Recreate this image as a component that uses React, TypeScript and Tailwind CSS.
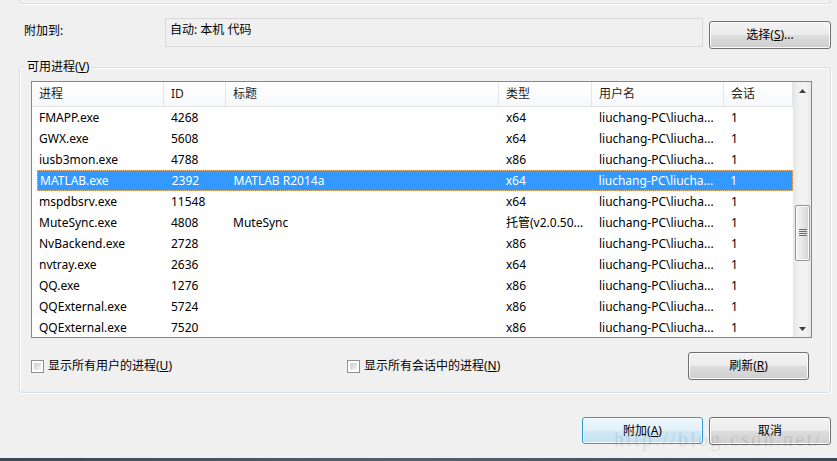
import React from "react";

const rows = [
  ["FMAPP.exe", "4268", "", "x64"],
  ["GWX.exe", "5608", "", "x64"],
  ["iusb3mon.exe", "4788", "", "x86"],
  ["MATLAB.exe", "2392", "MATLAB R2014a", "x64"],
  ["mspdbsrv.exe", "11548", "", "x64"],
  ["MuteSync.exe", "4808", "MuteSync", "托管(v2.0.50..."],
  ["NvBackend.exe", "2728", "", "x86"],
  ["nvtray.exe", "2636", "", "x64"],
  ["QQ.exe", "1276", "", "x86"],
  ["QQExternal.exe", "5724", "", "x86"],
  ["QQExternal.exe", "7520", "", "x86"],
];

function WinButton({ children, primary = false, className = "" }: { children: React.ReactNode; primary?: boolean; className?: string }) {
  return (
    <button
      className={
        primary
          ? `h-[27px] rounded-[3px] border border-[#3399dd] bg-[linear-gradient(#eef7fd_0%,#e1f0fa_50%,#d2e9f6_50%,#c4e0f2_100%)] shadow-[inset_0_0_0_1px_#f4fafe] text-[12px] text-black ${className}`
          : `h-[28px] rounded-[3px] border border-[#707070] bg-[linear-gradient(#f3f3f3_0%,#ebebeb_50%,#dddddd_50%,#cfcfcf_100%)] shadow-[inset_0_0_0_1px_#fbfbfb] text-[12px] text-black ${className}`
      }
    >
      {children}
    </button>
  );
}

function CheckBox({ label }: { label: React.ReactNode }) {
  return (
    <div className="flex items-center gap-[4px]">
      <div className="h-[13px] w-[13px] border border-[#8e8f8f] bg-white p-[2px]">
        <div className="h-full w-full bg-[linear-gradient(135deg,#cdcdcd,#f5f5f5)]" />
      </div>
      <span>{label}</span>
    </div>
  );
}

const colW = ["w-[127px] pl-[2px]", "w-[62px] pl-[7px]", "w-[273px] pl-[7px]", "w-[93px] pl-[7px]", "w-[132px] pl-[7px]", "w-[69px] pl-[7px]"];
const headW = ["w-[132px] pl-[7px]", "w-[62px] pl-[7px]", "w-[273px] pl-[7px]", "w-[93px] pl-[7px]", "w-[132px] pl-[7px]", "w-[69px] pl-[7px]"];

export default function App() {
  return (
    <div className="relative flex h-[461px] w-[837px] flex-col overflow-hidden bg-[#f0f0f0] font-['Noto_Sans','Noto_Sans_CJK_SC',sans-serif] text-[12px] text-black">
      {/* bottom edge of the group box above */}
      <div className="ml-[19px] h-[4px] w-[812px] rounded-b-[3px] border-x border-b border-[#d5dfe5] shadow-[0_1px_0_#ffffff]" />

      <div className="mt-[14px] flex items-start">
        <div className="w-[165px] pl-[24px] pt-[5px] leading-[16px]">附加到:</div>
        <div className="h-[29px] w-[538px] border border-[#d9d9d9] bg-[#f0f0f0] pl-[4px] pt-[3px] leading-[16px]">
          自动: 本机 代码
        </div>
        <WinButton className="ml-[6px] mt-[3px] w-[122px]">
          选择(<u>S</u>)...
        </WinButton>
      </div>

      <div className="relative ml-[19px] mt-[18px] flex h-[326px] w-[812px] flex-col rounded-[3px] border border-[#d5dfe5] shadow-[inset_1px_1px_0_#ffffff,1px_1px_0_#ffffff]">
        <span className="absolute left-[5px] top-[-9px] bg-[#f0f0f0] px-[2px] leading-[16px]">
          可用进程(<u>V</u>)
        </span>

        <div className="ml-[11px] mt-[13px] flex h-[257px] w-[781px] border border-[#828790] bg-white">
          <div className="flex w-[761px] flex-col overflow-hidden">
            <div className="flex h-[25px] shrink-0 border-b border-[#e2e4e8] bg-[linear-gradient(#ffffff,#f7f8fa)]">
              {["进程", "ID", "标题", "类型", "用户名", "会话"].map((h, i) => (
                <div key={h} className={`${headW[i]} flex items-center border-r border-[#e3e5e8] text-[#1e1e1e]`}>
                  {h}
                </div>
              ))}
            </div>
            {rows.map((r, idx) => {
              const sel = idx === 3;
              return (
                <div key={idx} className="h-[21px] shrink-0 pl-[5px]">
                  <div
                    className={
                      sel
                        ? "flex h-[21px] border border-dotted border-[#f2b878] bg-[#3399ff] leading-[19px] text-white"
                        : "flex h-[21px] leading-[21px]"
                    }
                  >
                    {[r[0], r[1], r[2], r[3], "liuchang-PC\\liucha...", "1"].map((c, i) => (
                      <div key={i} className={`${colW[i]} overflow-hidden whitespace-nowrap`}>
                        {c}
                      </div>
                    ))}
                  </div>
                </div>
              );
            })}
          </div>

          {/* vertical scrollbar */}
          <div className="flex w-[18px] flex-col items-center border-l border-[#e6e6e6] bg-[linear-gradient(90deg,#e8e8e8,#f2f2f2_30%,#f2f2f2_70%,#e8e8e8)]">
            <div className="flex h-[17px] items-center justify-center">
              <svg width="7" height="4" viewBox="0 0 7 4">
                <path d="M3.5 0 L7 4 L0 4 Z" fill="#3f3f3f" />
              </svg>
            </div>
            <div className="h-[106px]" />
            <div className="flex h-[56px] w-[15px] items-center justify-center rounded-[2px] border border-[#979797] bg-[linear-gradient(90deg,#f5f5f5,#e6e6e6_50%,#d2d2d2)] shadow-[inset_0_0_0_1px_#fafafa]">
              <svg width="8" height="8" viewBox="0 0 8 8">
                <path d="M0 0.5 H8 M0 2.5 H8 M0 4.5 H8 M0 6.5 H8" stroke="#6d6d6d" strokeWidth="1" />
              </svg>
            </div>
            <div className="flex-1" />
            <div className="flex h-[17px] items-center justify-center">
              <svg width="7" height="4" viewBox="0 0 7 4">
                <path d="M0 0 L7 0 L3.5 4 Z" fill="#3f3f3f" />
              </svg>
            </div>
          </div>
        </div>

        <div className="ml-[11px] mt-[14px] flex h-[28px] items-center">
          <div className="w-[316px]">
            <CheckBox label={<>显示所有用户的进程(<u>U</u>)</>} />
          </div>
          <div className="w-[341px]">
            <CheckBox label={<>显示所有会话中的进程(<u>N</u>)</>} />
          </div>
          <WinButton className="w-[121px]">
            刷新(<u>R</u>)
          </WinButton>
        </div>
      </div>

      <div className="mt-[24px] flex justify-end gap-[6px] pr-[6px]">
        <WinButton primary className="w-[121px]">
          附加(<u>A</u>)
        </WinButton>
        <WinButton className="w-[122px]">取消</WinButton>
      </div>

      <div className="mt-auto h-[3px] bg-[linear-gradient(90deg,#3a4757,#52606e,#3a4757)]" />

      <span className="pointer-events-none absolute left-[614px] top-[424px] font-['Liberation_Serif',serif] text-[20px] tracking-[2.3px] text-black/10">
        http://blog.csdn.net/
      </span>
    </div>
  );
}
